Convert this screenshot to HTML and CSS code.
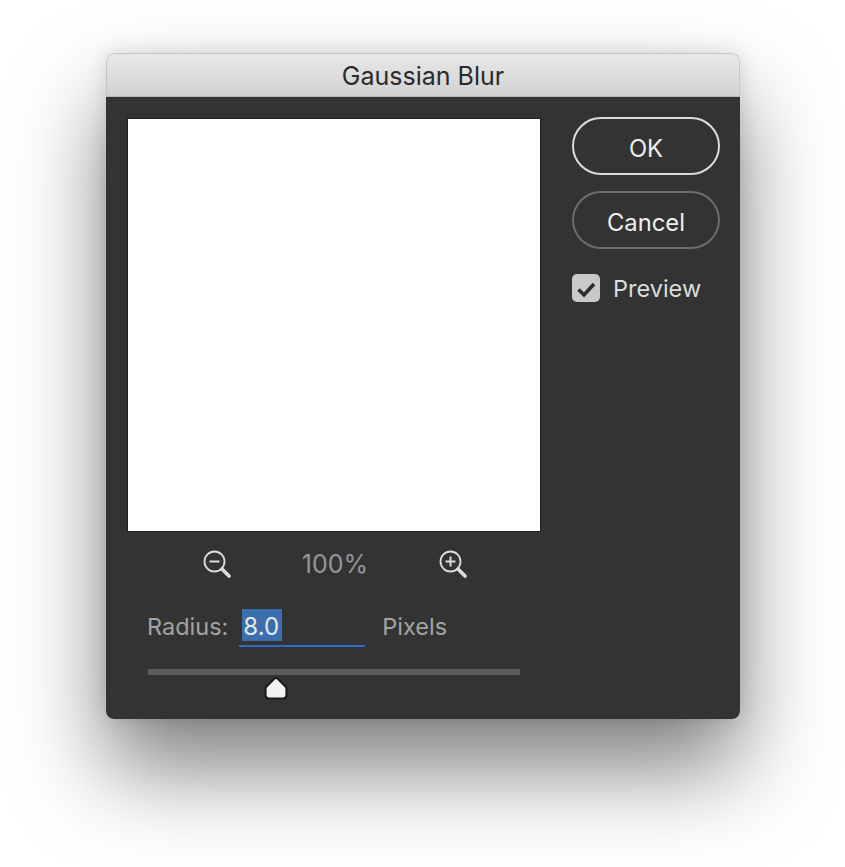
FILE: index.html
```html
<!DOCTYPE html>
<html lang="en">
<head>
  <meta charset="UTF-8">
  <meta name="viewport" content="width=device-width, initial-scale=1.0">
  <title>Gaussian Blur</title>
  <link rel="stylesheet" href="styles.css">
</head>
<body>
  <div class="dialog">
    <div class="titlebar">Gaussian Blur</div>
    <div class="content">
      <div class="main">
        <div class="preview"></div>
        <div class="zoom">
          <svg class="zoom-icon" viewBox="0 0 28 28" width="28" height="28">
            <circle cx="11.5" cy="11.5" r="10" fill="none" stroke="#ddd" stroke-width="1.8"/>
            <path d="M6.500 11.500h10" stroke="#ddd" stroke-width="2" fill="none"/>
            <path d="M19 19l7 7" stroke="#ddd" stroke-width="3.600" stroke-linecap="round" fill="none"/>
          </svg>
          <span class="zoom-value">100%</span>
          <svg class="zoom-icon" viewBox="0 0 28 28" width="28" height="28">
            <circle cx="11.5" cy="11.5" r="10" fill="none" stroke="#ddd" stroke-width="1.8"/>
            <path d="M6.500 11.500h10M11.500 6.500v10" stroke="#ddd" stroke-width="2" fill="none"/>
            <path d="M19 19l7 7" stroke="#ddd" stroke-width="3.600" stroke-linecap="round" fill="none"/>
          </svg>
        </div>
        <div class="radius">
          <span class="label">Radius:</span>
          <div class="field"><span class="selected">8.0</span></div>
          <span class="label">Pixels</span>
        </div>
        <div class="slider">
          <div class="track"></div>
          <svg class="thumb" viewBox="0 0 24 24" width="24" height="24">
            <path d="M10.500 2.500Q12 1 13.500 2.500L21.500 10.500Q22.500 11.500 22.500 13V19Q22.500 22.500 19 22.500H5Q1.500 22.500 1.500 19V13Q1.500 11.500 2.500 10.500Z" fill="#f2f2f2" stroke="#1c1c1c" stroke-width="2.200" stroke-linejoin="round"/>
          </svg>
        </div>
      </div>
      <div class="side">
        <button class="btn btn-ok">OK</button>
        <button class="btn btn-cancel">Cancel</button>
        <div class="check-row">
          <span class="check">
            <svg viewBox="0 0 28 28" width="28" height="28">
              <path d="M6.500 15.500L12 21L22 10" fill="none" stroke="#2e2e2e" stroke-width="3.600"/>
            </svg>
          </span>
          <span class="check-label">Preview</span>
        </div>
      </div>
    </div>
  </div>
</body>
</html>
```

FILE: styles.css
```css
* {
  margin: 0;
  padding: 0;
  box-sizing: border-box;
}
body {
  background-color: #fff;
  font-family: Inter, "Open Sans", sans-serif;
  height: 867px;
  overflow: hidden;
}
.dialog {
  width: 634px;
  height: 666px;
  margin: 53px 0 0 106px;
  border-radius: 8px;
  overflow: hidden;
  box-shadow: 0 50px 90px rgba(0, 0, 0, 0.5), 0 0 20px rgba(0, 0, 0, 0.12);
}
.titlebar {
  height: 44px;
  background: linear-gradient(#e8e8e8, #d2d2d2);
  border: 1px solid #c6c6c6;
  border-bottom-color: #b8b8b8;
  border-radius: 8px 8px 0 0;
  text-align: center;
  font-size: 25px;
  line-height: 45px;
  color: #2a2a2a;
}
.content {
  display: flex;
  height: 622px;
  padding: 21px 20px 0 21px;
  gap: 31px;
  background-color: #333;
}
.main {
  width: 414px;
}
.preview {
  width: 414px;
  height: 414px;
  background-color: #fff;
  border: 1px solid #1f1f1f;
}
.zoom {
  display: flex;
  align-items: center;
  height: 28px;
  margin-top: 18px;
  padding-left: 76px;
}
.zoom-value {
  width: 208px;
  text-align: center;
  font-size: 25px;
  color: #92979c;
}
.radius {
  display: flex;
  align-items: flex-start;
  margin-top: 31px;
  padding-left: 20px;
  color: #a3a3a3;
  font-size: 23.5px;
}
.label {
  line-height: 36px;
}
.field {
  width: 126px;
  height: 38px;
  margin: 0 17px 0 11px;
  padding-left: 3px;
  border-bottom: 2px solid #2f6bc6;
}
.selected {
  display: block;
  width: 40px;
  height: 32px;
  padding-left: 1px;
  background-color: #3b6ead;
  color: #e8e8e8;
  line-height: 36px;
  font-size: 24px;
}
.slider {
  position: relative;
  margin: 22px 0 0 21px;
  width: 372px;
  height: 30px;
}
.track {
  height: 6px;
  background-color: #5c5c5c;
}
.thumb {
  position: absolute;
  left: 116px;
  top: 7px;
}
.side {
  width: 148px;
  margin-top: -1px;
}
.btn {
  display: block;
  width: 148px;
  height: 58px;
  margin-bottom: 16px;
  padding-top: 4px;
  border-radius: 29px;
  background: transparent;
  font-family: inherit;
  font-size: 23.8px;
  color: #eee;
}
.btn-ok {
  border: 2px solid #dcdcdc;
}
.btn-cancel {
  border: 2px solid #6c6c6c;
}
.check-row {
  display: flex;
  align-items: center;
  gap: 13px;
  margin-top: 24px;
}
.check {
  width: 28px;
  height: 28px;
  border-radius: 5px;
  background-color: #c9c9c9;
}
.check svg {
  display: block;
}
.check-label {
  padding-top: 1px;
  font-size: 23.5px;
  color: #ddd;
}
```
